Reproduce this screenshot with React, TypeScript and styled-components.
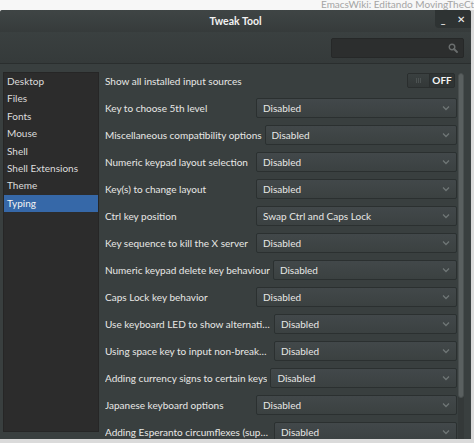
import React from 'react';
import styled, { createGlobalStyle } from 'styled-components';

const GlobalStyle = createGlobalStyle`
  html, body { margin: 0; padding: 0; background: #e4e4e4; }
  body { font-family: Lato, "Open Sans", "DejaVu Sans", sans-serif; }
  * { box-sizing: border-box; }
`;

const Screen = styled.div`
  width: 474px;
  height: 443px;
  overflow: hidden;
  display: flex;
  flex-direction: column;
  background: #dadada;
`;

const BackWindow = styled.div`
  flex: 0 0 10px;
  background: #f7f7f7;
  color: #a4a4a4;
  font-size: 10px;
  line-height: 8px;
  padding-left: 321px;
  white-space: nowrap;
  overflow: hidden;
`;

const Window = styled.div`
  width: 471px;
  flex: 0 0 429px;
  display: flex;
  flex-direction: column;
  background: #393f3f;
  border-radius: 3px 3px 0 0;
  overflow: hidden;
  color: #e8e8e6;
`;

const TitleBar = styled.div`
  flex: 0 0 22px;
  display: grid;
  grid-template-columns: 1fr auto 1fr;
  align-items: start;
  background: linear-gradient(#3f4545, #363b3b);
`;

const Title = styled.div`
  grid-column: 2;
  font-size: 10.5px;
  font-weight: 700;
  line-height: 22px;
  color: #f2f2f2;
`;

const Controls = styled.div`
  grid-column: 3;
  justify-self: end;
  width: 36px;
  height: 18px;
  display: flex;
  align-items: center;
  justify-content: space-around;
  background: #2e3333;
  border-bottom-left-radius: 4px;
  color: #f4f4f4;
  font-size: 10px;
  font-weight: 700;
`;

const HeaderBar = styled.div`
  flex: 0 0 32px;
  display: flex;
  align-items: center;
  justify-content: flex-end;
  padding-right: 7px;
  background: linear-gradient(#3a4040, #353a3a);
  border-bottom: 1px solid #2a2e2e;
`;

const Search = styled.div`
  width: 133px;
  height: 20px;
  display: flex;
  align-items: center;
  justify-content: flex-end;
  padding-right: 5px;
  background: #2c2e2e;
  border: 1px solid #262828;
  border-radius: 2px;
`;

const Body = styled.div`
  flex: 1;
  display: flex;
  min-height: 0;
`;

const Sidebar = styled.ul`
  list-style: none;
  width: 96px;
  margin: 8px 0 7px 3px;
  padding: 0;
  background: #2c2c2c;
  border: 1px solid #262626;
`;

const SideItem = styled.li<{ $active?: boolean }>`
  height: 17.4px;
  line-height: 17.4px;
  padding-left: 3px;
  font-size: 10px;
  color: ${p => (p.$active ? '#f4f4f4' : '#dcdcdc')};
  background: ${p => (p.$active ? '#3668a8' : 'transparent')};
`;

const Content = styled.div`
  flex: 1;
  display: flex;
  min-width: 0;
`;

const Rows = styled.div`
  flex: 1;
  min-width: 0;
  padding: 3px 0 0 6px;
  overflow: hidden;
`;

const Row = styled.div`
  height: 27px;
  display: flex;
  align-items: center;
  gap: 3px;
`;

const Label = styled.span`
  flex: 0 0 auto;
  min-width: 148px;
  max-width: 166px;
  font-size: 10px;
  white-space: nowrap;
  overflow: hidden;
  text-overflow: ellipsis;
`;

const Spacer = styled.div`
  flex: 1;
`;

const Combo = styled.div`
  flex: 1;
  min-width: 0;
  height: 20px;
  display: flex;
  align-items: center;
  padding: 0 6px;
  background: linear-gradient(#42484a, #3b4141);
  border: 1px solid #2b3030;
  border-radius: 2px;
  font-size: 10px;
  color: #e8e8e6;
`;

const ComboText = styled.span`
  flex: 1;
  white-space: nowrap;
  overflow: hidden;
`;

const Switch = styled.div`
  width: 48px;
  height: 15px;
  margin-right: 2px;
  display: flex;
  border: 1px solid #2a2e2e;
  border-radius: 2px;
  background: #2f3434;
  overflow: hidden;
`;

const Knob = styled.div`
  flex: 0 0 22px;
  display: flex;
  align-items: center;
  justify-content: center;
  gap: 1px;
  background: linear-gradient(#3a4040, #333838);
  border-right: 1px solid #2a2e2e;
  > i {
    width: 1px;
    height: 5px;
    background: #4c5252;
  }
`;

const SwitchText = styled.div`
  flex: 1;
  text-align: center;
  font-size: 10px;
  font-weight: 700;
  line-height: 13px;
  color: #f4f4f4;
`;

const Track = styled.div`
  width: 6px;
  margin: 9px 7px 0 1px;
  background: #343939;
  border-radius: 3px 3px 0 0;
`;

const Thumb = styled.div`
  height: 325px;
  border-radius: 3px;
  background: #5a6060;
  border: 1px solid #4a5050;
`;

const Chevron = () => (
  <svg width="8" height="6" viewBox="0 0 8 6">
    <path d="M1 1.5 L4 4.5 L7 1.5" fill="none" stroke="#6f7676" strokeWidth="1.3" />
  </svg>
);

const SearchIcon = () => (
  <svg width="10" height="10" viewBox="0 0 10 10">
    <circle cx="4" cy="4" r="2.8" fill="none" stroke="#6a6e6e" strokeWidth="1.4" />
    <path d="M6 6 L9 9" stroke="#6a6e6e" strokeWidth="1.8" strokeLinecap="round" />
  </svg>
);

const pages = ['Desktop', 'Files', 'Fonts', 'Mouse', 'Shell', 'Shell Extensions', 'Theme', 'Typing'];

const options: [string, string][] = [
  ['Key to choose 5th level', 'Disabled'],
  ['Miscellaneous compatibility options', 'Disabled'],
  ['Numeric keypad layout selection', 'Disabled'],
  ['Key(s) to change layout', 'Disabled'],
  ['Ctrl key position', 'Swap Ctrl and Caps Lock'],
  ['Key sequence to kill the X server', 'Disabled'],
  ['Numeric keypad delete key behaviour', 'Disabled'],
  ['Caps Lock key behavior', 'Disabled'],
  ['Use keyboard LED to show alternative layout', 'Disabled'],
  ['Using space key to input non-breakable space character', 'Disabled'],
  ['Adding currency signs to certain keys', 'Disabled'],
  ['Japanese keyboard options', 'Disabled'],
  ['Adding Esperanto circumflexes (supersigno)', 'Disabled'],
];

export default function App() {
  return (
    <Screen>
      <GlobalStyle />
      <BackWindow>EmacsWiki: Editando MovingTheCtrlKey</BackWindow>
      <Window>
        <TitleBar>
          <Title>Tweak Tool</Title>
          <Controls>
            <span>_</span>
            <span>✕</span>
          </Controls>
        </TitleBar>
        <HeaderBar>
          <Search>
            <SearchIcon />
          </Search>
        </HeaderBar>
        <Body>
          <Sidebar>
            {pages.map(p => (
              <SideItem key={p} $active={p === 'Typing'}>{p}</SideItem>
            ))}
          </Sidebar>
          <Content>
            <Rows>
              <Row>
                <Label>Show all installed input sources</Label>
                <Spacer />
                <Switch>
                  <Knob><i /><i /><i /></Knob>
                  <SwitchText>OFF</SwitchText>
                </Switch>
              </Row>
              {options.map(([label, value]) => (
                <Row key={label}>
                  <Label>{label}</Label>
                  <Combo>
                    <ComboText>{value}</ComboText>
                    <Chevron />
                  </Combo>
                </Row>
              ))}
            </Rows>
            <Track>
              <Thumb />
            </Track>
          </Content>
        </Body>
      </Window>
    </Screen>
  );
}
